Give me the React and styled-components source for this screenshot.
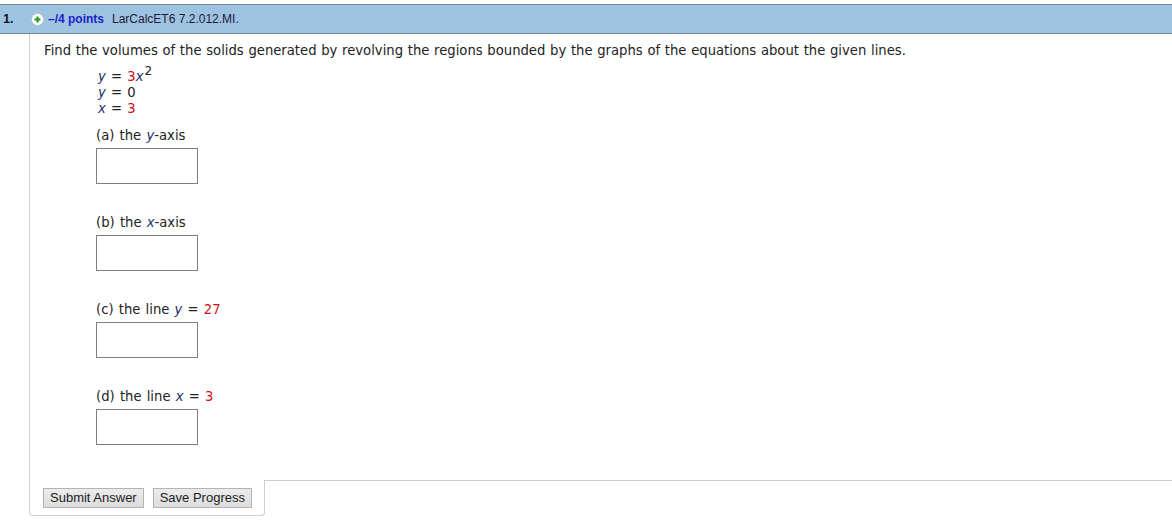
import React from "react";
import styled, { createGlobalStyle } from "styled-components";

const Global = createGlobalStyle`
  html, body { margin: 0; padding: 0; background: #fff; }
  body { font-family: "DejaVu Sans", Verdana, sans-serif; }
`;

const Page = styled.div`
  width: 1172px;
  padding-top: 4px;
`;

const Header = styled.div`
  height: 28px;
  background: #9dc3e0;
  border-top: 1px solid #6f8798;
  border-bottom: 1px solid #6f8798;
  display: flex;
  align-items: center;
  font-family: "Liberation Sans", Arial, sans-serif;
  font-size: 12px;
`;

const Num = styled.span`
  font-weight: bold;
  color: #111;
  width: 30px;
`;

const PlusIcon = styled.span`
  width: 13px;
  height: 13px;
  border-radius: 50%;
  background: #fff;
  border: 1px solid #b9c4cc;
  box-sizing: border-box;
  display: inline-flex;
  align-items: center;
  justify-content: center;
  margin-right: 4px;
  margin-left: 1px;
`;

const Points = styled.span`
  font-weight: bold;
  color: #1f1fc8;
  margin-right: 8px;
`;

const Code = styled.span`
  color: #23193a;
`;

const Body = styled.div`
  margin-left: 29px;
  border-left: 1px solid #cfcfcf;
  padding: 8px 0 35px 14px;
  font-size: 13.2px;
  word-spacing: 0.5px;
  color: #222;
  line-height: 18px;
`;

const Prompt = styled.div`
  height: 16px;
  margin-bottom: 10px;
  white-space: nowrap;
`;

const Equations = styled.div`
  margin-left: 54px;
  margin-bottom: 11px;
  word-spacing: 1px;
`;

const EqLine = styled.div`
  height: 16px;
`;

const V = styled.i`
  color: #1a2f6a;
`;

const Red = styled.span`
  color: #cc1111;
`;

const Sup = styled.sup`
  font-size: 12px;
  line-height: 0;
  vertical-align: 6px;
  margin-left: 1px;
`;

const Part = styled.div`
  margin-left: 52px;
  margin-bottom: ${(p) => (p.$last ? 0 : 30)}px;
`;

const Label = styled.div`
  height: 16px;
  word-spacing: 1px;
`;

const Answer = styled.div`
  margin-top: 5px;
  width: 102px;
  height: 36px;
  box-sizing: border-box;
  border: 1px solid #7f7f7f;
  background: #fff;
`;

const Footer = styled.div`
  display: flex;
  margin-left: 29px;
`;

const ButtonBox = styled.div`
  display: flex;
  gap: 9px;
  padding: 8px 12px 7px 13px;
  border-left: 1px solid #cfcfcf;
  border-right: 1px solid #cfcfcf;
  border-bottom: 1px solid #cfcfcf;
  border-radius: 0 0 4px 4px;
`;

const Filler = styled.div`
  flex: 1;
  border-top: 1px solid #cfcfcf;
`;

const Button = styled.button`
  height: 20px;
  padding: 0 6px;
  font-family: "Liberation Sans", Arial, sans-serif;
  font-size: 13px;
  color: #222;
  background: linear-gradient(#ececec, #dcdcdc);
  border: 1px solid #b4b4b4;
  border-radius: 0;
  margin: 0;
  line-height: 18px;
`;

const parts = [
  { k: "a", content: <>the <V>y</V>-axis</> },
  { k: "b", content: <>the <V>x</V>-axis</> },
  { k: "c", content: <>the line <V>y</V> = <Red>27</Red></> },
  { k: "d", content: <>the line <V>x</V> = <Red>3</Red></> },
];

export default function App() {
  return (
    <Page>
      <Global />
      <Header>
        <Num>&nbsp;1.</Num>
        <PlusIcon>
          <svg width="7" height="7" viewBox="0 0 7 7">
            <path d="M3.5 0.5v6M0.5 3.5h6" stroke="#1d9a1d" strokeWidth="2" />
          </svg>
        </PlusIcon>
        <Points>–/4 points</Points>
        <Code>LarCalcET6 7.2.012.MI.</Code>
      </Header>
      <Body>
        <Prompt>
          Find the volumes of the solids generated by revolving the regions bounded by the graphs of the equations about the given lines.
        </Prompt>
        <Equations>
          <EqLine><V>y</V> = <Red>3</Red><V>x</V><Sup>2</Sup></EqLine>
          <EqLine><V>y</V> = 0</EqLine>
          <EqLine><V>x</V> = <Red>3</Red></EqLine>
        </Equations>
        {parts.map((p, i) => (
          <Part key={p.k} $last={i === parts.length - 1}>
            <Label>({p.k}) {p.content}</Label>
            <Answer />
          </Part>
        ))}
      </Body>
      <Footer>
        <ButtonBox>
          <Button>Submit Answer</Button>
          <Button>Save Progress</Button>
        </ButtonBox>
        <Filler />
      </Footer>
    </Page>
  );
}
